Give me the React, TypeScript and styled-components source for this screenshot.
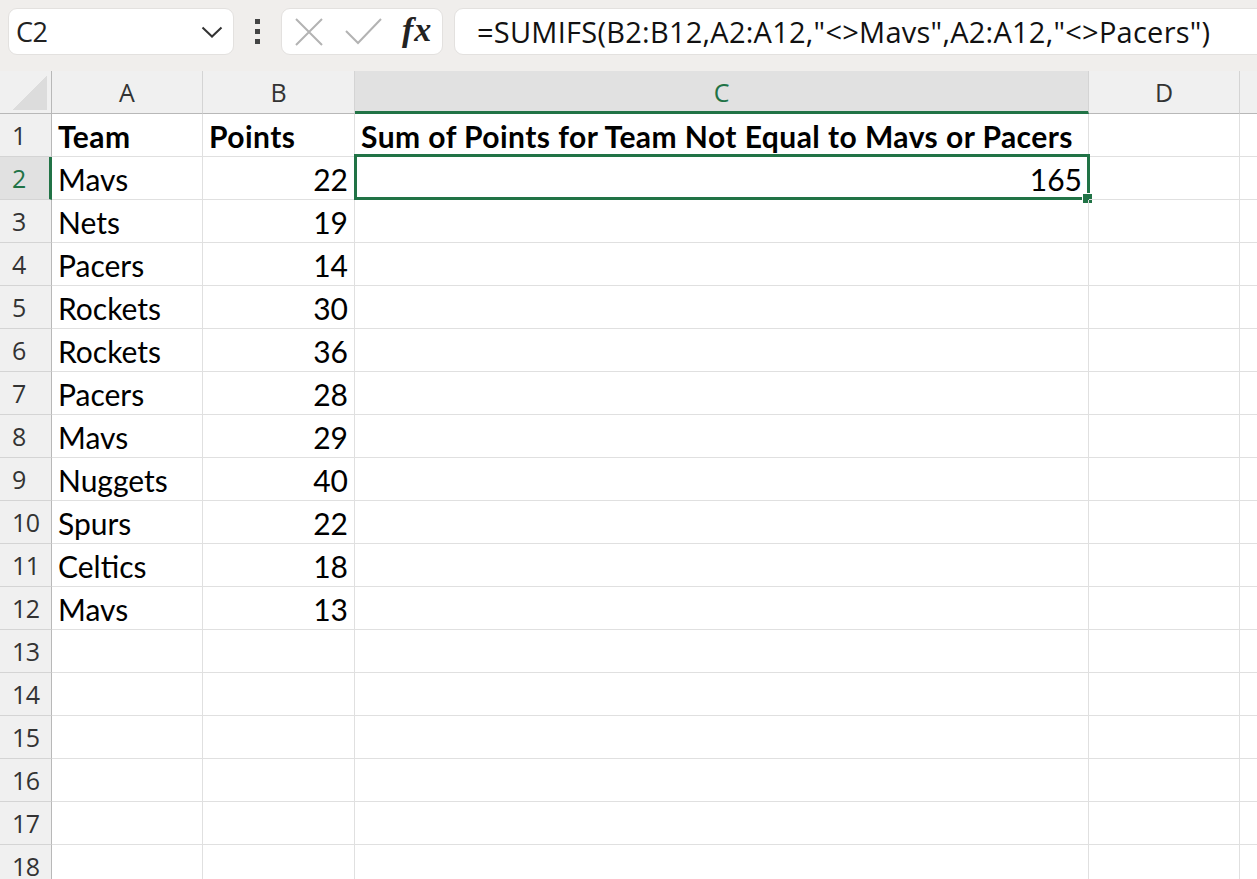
import React from "react";
import styled, { createGlobalStyle } from "styled-components";

const GREEN = "#217346";

const Global = createGlobalStyle`
  html, body { margin: 0; padding: 0; background: #ffffff; overflow: hidden; }
  * { box-sizing: border-box; }
`;

const Page = styled.div`
  width: 1257px;
  height: 879px;
  overflow: hidden;
  display: flex;
  flex-direction: column;
  background: #fff;
`;

const Toolbar = styled.div`
  height: 71px;
  flex: none;
  background: #f0eeec;
  display: flex;
  align-items: flex-start;
  padding: 8px 0 0 8px;
  overflow: hidden;
`;

const Box = styled.div<{ $w: number }>`
  width: ${(p) => p.$w}px;
  flex: none;
  height: 47px;
  background: #fff;
  border: 1px solid #e3e1df;
  border-radius: 9px;
  display: flex;
  align-items: center;
`;

const NameBox = styled(Box)`
  padding: 0 10px 0 7px;
  justify-content: space-between;
`;

const NameText = styled.span`
  font-family: "Open Sans", "Noto Sans", sans-serif;
  font-size: 27px;
  color: #222;
  letter-spacing: -0.5px;
`;

const Dots = styled.div`
  width: 47px;
  flex: none;
  height: 47px;
  display: flex;
  flex-direction: column;
  align-items: center;
  justify-content: center;
  gap: 5px;
`;

const Dot = styled.span`
  width: 5px;
  height: 5px;
  background: #444;
`;

const FuncBox = styled(Box)`
  padding: 0 0 0 13px;
  gap: 22px;
`;

const Fx = styled.span`
  font-family: "Liberation Serif", "DejaVu Serif", serif;
  font-style: italic;
  font-weight: bold;
  font-size: 34px;
  color: #222;
  margin-left: -2px;
  letter-spacing: 1px;
  line-height: 1;
  padding-bottom: 3px;
`;

const FormulaBox = styled(Box)`
  margin-left: 11px;
  padding-left: 22px;
`;

const FormulaText = styled.span`
  font-family: "Open Sans", "Noto Sans", sans-serif;
  font-size: 29px;
  color: #111;
  letter-spacing: 0.25px;
  white-space: nowrap;
`;

const Grid = styled.div`
  display: grid;
  grid-template-columns: 52px 151px 152px 734px 151px 100px;
  grid-auto-rows: 43px;
  grid-template-rows: 43px;
`;

const Corner = styled.div`
  background: #f0f0f0;
  border-right: 1px solid #b8b8b8;
  border-bottom: 1px solid #b8b8b8;
  display: flex;
  align-items: flex-end;
  justify-content: flex-end;
  padding: 0 4px 3px 0;
`;

const Triangle = styled.div`
  width: 35px;
  height: 35px;
  background: linear-gradient(to bottom right, transparent 50%, #dcdcdc 50%);
`;

const ColHead = styled.div<{ $sel?: boolean }>`
  background: ${(p) => (p.$sel ? "#e1e1e1" : "#f0f0f0")};
  border-right: 1px solid #d4d4d4;
  border-bottom: ${(p) => (p.$sel ? `3px solid ${GREEN}` : "1px solid #b8b8b8")};
  display: flex;
  align-items: center;
  justify-content: center;
  padding-top: ${(p) => (p.$sel ? "2px" : "0")};
  font-family: "Open Sans", "Noto Sans", sans-serif;
  font-size: 25px;
  color: ${(p) => (p.$sel ? GREEN : "#333")};
`;

const RowHead = styled.div<{ $sel?: boolean }>`
  background: ${(p) => (p.$sel ? "#e1e1e1" : "#f0f0f0")};
  border-bottom: 1px solid #d4d4d4;
  border-right: ${(p) => (p.$sel ? `3px solid ${GREEN}` : "1px solid #b8b8b8")};
  display: flex;
  align-items: center;
  padding-left: 12px;
  font-family: "Open Sans", "Noto Sans", sans-serif;
  font-size: 25px;
  color: ${(p) => (p.$sel ? GREEN : "#333")};
  letter-spacing: -0.5px;
`;

const Cell = styled.div<{ $right?: boolean; $bold?: boolean }>`
  position: relative;
  border-right: 1px solid #e0e0e0;
  border-bottom: 1px solid #e0e0e0;
  display: flex;
  align-items: center;
  justify-content: ${(p) => (p.$right ? "flex-end" : "flex-start")};
  padding: 2px 6px 0 6px;
  font-family: Lato, "Liberation Sans", sans-serif;
  font-size: 30px;
  font-weight: ${(p) => (p.$bold ? 700 : 400)};
  letter-spacing: ${(p) => (p.$bold ? "0.45px" : "0")};
  color: #000;
  white-space: nowrap;
`;

const Selection = styled.div`
  position: absolute;
  left: -1px;
  top: -3px;
  right: -2px;
  bottom: -1px;
  border: 3px solid ${GREEN};
  pointer-events: none;
`;

const Handle = styled.div`
  position: absolute;
  right: -6px;
  bottom: -7px;
  width: 9px;
  height: 9px;
  background: ${GREEN};
  border: 1px solid #fff;
  box-sizing: content-box;
`;

const data: [string, string][] = [
  ["Mavs", "22"],
  ["Nets", "19"],
  ["Pacers", "14"],
  ["Rockets", "30"],
  ["Rockets", "36"],
  ["Pacers", "28"],
  ["Mavs", "29"],
  ["Nuggets", "40"],
  ["Spurs", "22"],
  ["Celtics", "18"],
  ["Mavs", "13"],
];

export default function App() {
  const rows: React.ReactNode[] = [];
  for (let r = 1; r <= 18; r++) {
    const d = r >= 2 && r <= 12 ? data[r - 2] : null;
    rows.push(
      <React.Fragment key={r}>
        <RowHead $sel={r === 2}>{r}</RowHead>
        <Cell $bold={r === 1}>{r === 1 ? "Team" : d ? d[0] : ""}</Cell>
        <Cell $bold={r === 1} $right={r !== 1}>
          {r === 1 ? "Points" : d ? d[1] : ""}
        </Cell>
        <Cell $bold={r === 1} $right={r === 2}>
          {r === 1 ? "Sum of Points for Team Not Equal to Mavs or Pacers" : r === 2 ? "165" : ""}
          {r === 2 && (
            <Selection>
              <Handle />
            </Selection>
          )}
        </Cell>
        <Cell />
        <Cell />
      </React.Fragment>
    );
  }
  return (
    <Page>
      <Global />
      <Toolbar>
        <NameBox $w={226}>
          <NameText>C2</NameText>
          <svg width="22" height="12" viewBox="0 0 22 12">
            <path d="M1.5 1.5 L11 10.5 L20.5 1.5" fill="none" stroke="#333" strokeWidth="2" />
          </svg>
        </NameBox>
        <Dots>
          <Dot />
          <Dot />
          <Dot />
        </Dots>
        <FuncBox $w={162}>
          <svg width="28" height="28" viewBox="0 0 28 28">
            <path d="M1 1 L27 27 M27 1 L1 27" stroke="#b3b3b3" strokeWidth="2" fill="none" />
          </svg>
          <svg width="37" height="27" viewBox="0 0 37 27">
            <path d="M1 13 L13 25 L36 1" stroke="#b3b3b3" strokeWidth="2" fill="none" />
          </svg>
          <Fx>fx</Fx>
        </FuncBox>
        <FormulaBox $w={830}>
          <FormulaText>=SUMIFS(B2:B12,A2:A12,"&lt;&gt;Mavs",A2:A12,"&lt;&gt;Pacers")</FormulaText>
        </FormulaBox>
      </Toolbar>
      <Grid>
        <Corner>
          <Triangle />
        </Corner>
        <ColHead>A</ColHead>
        <ColHead>B</ColHead>
        <ColHead $sel>C</ColHead>
        <ColHead>D</ColHead>
        <ColHead />
        {rows}
      </Grid>
    </Page>
  );
}
